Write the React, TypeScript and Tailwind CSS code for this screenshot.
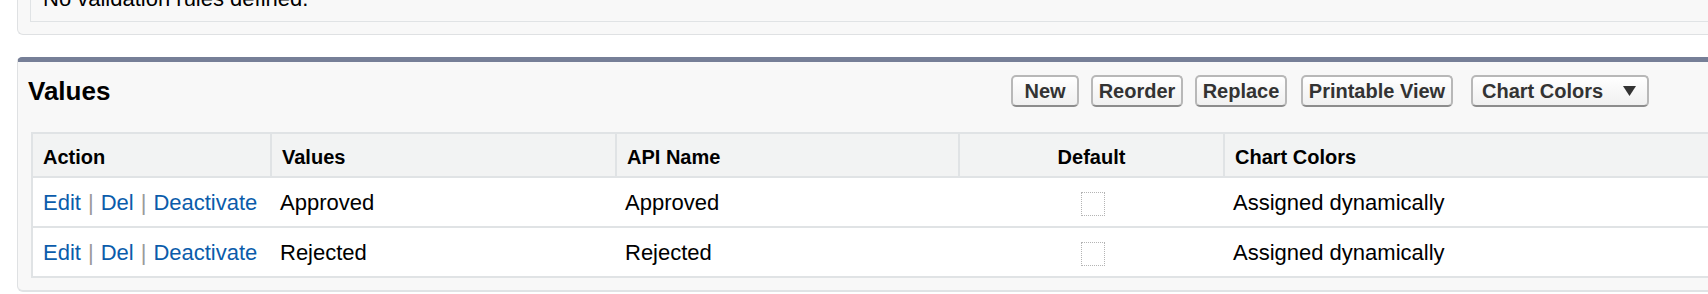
import React from "react";

const Btn = ({ label, w, ml }: { label: string; w: string; ml: string }) => (
  <button
    className={`${w} ${ml} h-[32px] shrink-0 rounded-[5px] border-2 border-[#b8b8b8] border-b-[#8c8c8c] bg-gradient-to-b from-white to-[#f0f0f0] text-[20px] leading-[24px] font-bold text-[#333] flex items-center justify-center`}
  >
    {label}
  </button>
);

const Checkbox = () => (
  <div className="w-[24px] h-[24px] border border-dotted border-[#b4b4b4] bg-white" />
);

const rows = [
  { value: "Approved", api: "Approved" },
  { value: "Rejected", api: "Rejected" },
];

export default function App() {
  return (
    <div className="w-full h-[294px] overflow-hidden bg-white font-['Liberation_Sans',Arial,sans-serif] text-black">
      {/* Previous panel (cut off) */}
      <div className="ml-[17px] mt-[-30px] h-[65px] w-[1720px] bg-[#f8f8f8] border-l border-b border-[#dfe1e3] rounded-bl-[6px] pl-[12px] pb-[12px]">
        <div className="h-full border-l border-b border-[#e0e3e5] pl-[12px] pt-[16px]">
          <div className="text-[22px] leading-[26px]">No validation rules defined.</div>
        </div>
      </div>

      {/* Values panel */}
      <div className="ml-[17px] mt-[22px] w-[1720px] h-[235px] bg-[#f8f8f8] border-t-[5px] border-t-[#767f97] border-l border-b-2 border-l-[#dfe1e3] border-b-[#e0e3e5] rounded-tl-[5px] rounded-bl-[6px]">
        <div className="flex items-center h-[32px] mt-[13px] pl-[10px]">
          <div className="w-[983px] shrink-0 text-[26px] leading-[30px] font-bold">Values</div>
          <Btn label=" New " w="w-[68px]" ml="ml-0" />
          <Btn label="Reorder" w="w-[92px]" ml="ml-[12px]" />
          <Btn label="Replace" w="w-[92px]" ml="ml-[12px]" />
          <Btn label="Printable View" w="w-[152px]" ml="ml-[14px]" />
          <button className="w-[178px] ml-[18px] h-[32px] shrink-0 rounded-[5px] border-2 border-[#b8b8b8] border-b-[#8c8c8c] bg-gradient-to-b from-white to-[#f0f0f0] text-[20px] leading-[24px] font-bold text-[#333] flex items-center pl-[9px]">
            <span>Chart Colors</span>
            <svg className="ml-[20px]" width="13" height="10" viewBox="0 0 13 10">
              <polygon points="0,0 13,0 6.5,10" fill="#333" />
            </svg>
          </button>
        </div>

        {/* Table */}
        <div className="ml-[13px] mt-[25px] border-t-2 border-l-2 border-[#e0e3e5]">
          <div className="grid grid-cols-[237px_345px_343px_265px_1fr] h-[44px] bg-[#f2f3f3] border-b-2 border-[#e0e3e5] text-[20px] leading-[24px] font-bold">
            <div className="flex items-center pl-[10px] pt-[4px]">Action</div>
            <div className="flex items-center pl-[10px] pt-[4px] border-l-2 border-[#e0e3e5]">Values</div>
            <div className="flex items-center pl-[10px] pt-[4px] border-l-2 border-[#e0e3e5]">API Name</div>
            <div className="flex items-center justify-center pt-[4px] border-l-2 border-[#e0e3e5]">Default</div>
            <div className="flex items-center pl-[10px] pt-[4px] border-l-2 border-[#e0e3e5]">Chart Colors</div>
          </div>
          {rows.map((r) => (
            <div
              key={r.value}
              className="grid grid-cols-[237px_345px_343px_265px_1fr] h-[50px] bg-white border-b-2 border-[#e0e3e5] text-[22px] leading-[26px]"
            >
              <div className="flex items-center pl-[10px] pt-[2px] whitespace-nowrap">
                <a className="text-[#0b5cab]">Edit</a>
                <span className="text-[#9a9a9a] mx-[7px]">|</span>
                <a className="text-[#0b5cab]">Del</a>
                <span className="text-[#9a9a9a] mx-[7px]">|</span>
                <a className="text-[#0b5cab]">Deactivate</a>
              </div>
              <div className="flex items-center pl-[10px] pt-[2px]">{r.value}</div>
              <div className="flex items-center pl-[10px] pt-[2px]">{r.api}</div>
              <div className="flex items-center justify-center pl-[4px] pt-[4px]">
                <Checkbox />
              </div>
              <div className="flex items-center pl-[10px] pt-[2px]">Assigned dynamically</div>
            </div>
          ))}
        </div>
      </div>
    </div>
  );
}
